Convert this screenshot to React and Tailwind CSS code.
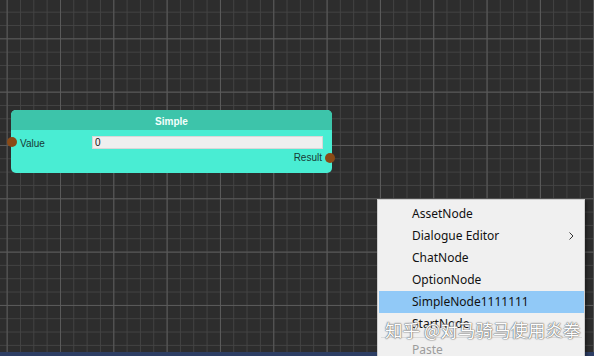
import { useState } from 'react';

const menuItems = [
  { label: 'AssetNode' },
  { label: 'Dialogue Editor', sub: true },
  { label: 'ChatNode' },
  { label: 'OptionNode' },
  { label: 'SimpleNode1111111', active: true },
  { label: 'StartNode' },
];

function Port({ className }) {
  return <div className={`absolute w-[10px] h-[10px] rounded-full bg-[#8a4a16] ${className}`} />;
}

function SimpleNode() {
  const [value, setValue] = useState('0');

  return (
    <div className="absolute left-[11px] top-[110px] w-[321px] h-[63px] rounded-[5px] bg-[#49edd3] font-['Liberation_Sans',sans-serif]">
      {/* Header */}
      <div className="h-[20px] pt-[3px] rounded-t-[5px] bg-[#3dc4aa] flex items-center justify-center text-[10px] font-bold text-[#f4fffc]">
        Simple
      </div>

      {/* Input row */}
      <div className="relative flex items-center h-[13px] mt-[6px] pr-[9px]">
        <Port className="left-[-4px] top-[1px]" />
        <span className="w-[81px] pl-[9px] text-[10px] pt-[1px] text-[#173a35]">Value</span>
        <input
          value={value}
          onChange={(e) => setValue(e.target.value)}
          className="flex-1 h-[13px] bg-[#efefef] border border-[#d8d8d8] px-[2px] text-[10px] leading-none text-[#111] outline-none"
        />
      </div>

      {/* Output row */}
      <div className="relative flex items-center justify-end h-[13px] mt-[2px] pr-[10px]">
        <span className="text-[10px] text-[#173a35]">Result</span>
        <Port className="right-[-3px] top-[2px]" />
      </div>
    </div>
  );
}

function ContextMenu() {
  return (
    <div className="absolute left-[377px] top-[199px] w-[208px] h-[170px] bg-[#f0f0f0] border border-[#cdcdcd] shadow-[2px_2px_3px_rgba(0,0,0,0.35)] pt-[3px] pl-[1px] font-['Noto_Sans',sans-serif] text-[12px] text-[#111]">
      {menuItems.map((item) => (
        <div
          key={item.label}
          className={`relative flex items-center h-[22px] pl-[33px] ${item.active ? 'bg-[#91c9f7]' : ''}`}
        >
          {item.label}
          {item.sub && (
            <svg className="absolute right-[10px] top-[7px]" width="5" height="8" viewBox="0 0 5 8">
              <polyline points="0.5,0.5 4,4 0.5,7.5" fill="none" stroke="#333" strokeWidth="1" />
            </svg>
          )}
        </div>
      ))}
      <div className="h-[4px] flex items-center mx-[2px]">
        <div className="h-px w-full bg-[#dadada]" />
      </div>
      <div className="flex items-center h-[22px] pl-[33px] text-[#9c9c9c]">Paste</div>
    </div>
  );
}

export default function App() {
  return (
    <div className="relative w-[594px] h-[356px] overflow-hidden flex flex-col bg-[#2d2d2d]">
      {/* Graph canvas */}
      <div className="flex-1 bg-[linear-gradient(to_right,#5a5a5a_1px,transparent_1px),linear-gradient(to_bottom,#5a5a5a_1px,transparent_1px),linear-gradient(to_right,#434343_1px,transparent_1px),linear-gradient(to_bottom,#434343_1px,transparent_1px)] bg-[size:53.33px_53.33px,53.33px_53.33px,13.33px_13.33px,13.33px_13.33px] bg-[position:6.67px_38.33px]" />
      {/* Bottom bar */}
      <div className="h-[4px] bg-[#2d3e64]" />

      <SimpleNode />
      <ContextMenu />

      {/* Watermark */}
      <div className="absolute left-[385px] top-[321px] text-[17.5px] leading-none whitespace-nowrap text-[#fdfdfd] [text-shadow:0_0_1px_#666,0_0_1px_#666,0_0_2px_#999] font-['Noto_Sans_CJK_SC',sans-serif]">
        知乎 @对马骑马使用炎拳
      </div>
    </div>
  );
}
